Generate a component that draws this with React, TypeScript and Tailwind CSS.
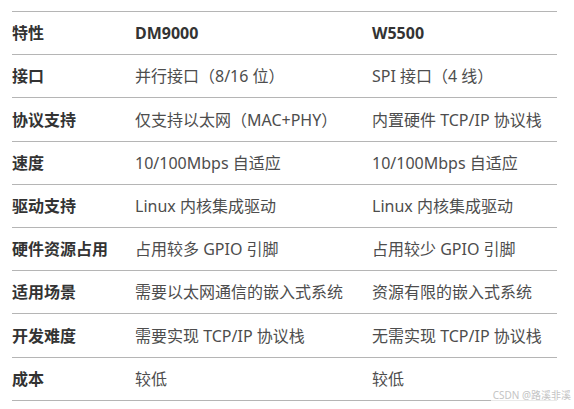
const rows = [
  { label: '接口', a: '并行接口（8/16 位）', b: 'SPI 接口（4 线）', h: 'h-[43px]' },
  { label: '协议支持', a: '仅支持以太网（MAC+PHY）', b: '内置硬件 TCP/IP 协议栈', h: 'h-[44px]' },
  { label: '速度', a: '10/100Mbps 自适应', b: '10/100Mbps 自适应', h: 'h-[43px]' },
  { label: '驱动支持', a: 'Linux 内核集成驱动', b: 'Linux 内核集成驱动', h: 'h-[43px]' },
  { label: '硬件资源占用', a: '占用较多 GPIO 引脚', b: '占用较少 GPIO 引脚', h: 'h-[43px]' },
  { label: '适用场景', a: '需要以太网通信的嵌入式系统', b: '资源有限的嵌入式系统', h: 'h-[43px]' },
  { label: '开发难度', a: '需要实现 TCP/IP 协议栈', b: '无需实现 TCP/IP 协议栈', h: 'h-[44px]' },
  { label: '成本', a: '较低', b: '较低', h: 'h-[43px]' },
]

export default function App() {
  return (
    <div
      className="relative w-[574px] h-[409px] bg-white overflow-hidden"
      style={{ fontFamily: '"Noto Sans", "Noto Sans CJK SC", sans-serif' }}
    >
      <div className="pt-[11px] pl-[12px] w-[557px]">
        <div className="border-t border-[#b5b5b5]">
          {/* Header */}
          <div className="flex items-center h-[43px] border-b border-[#b5b5b5] text-[16px] font-bold text-[#333]">
            <div className="w-[123px]">特性</div>
            <div className="w-[237px]">DM9000</div>
            <div className="flex-1">W5500</div>
          </div>
          {rows.map(r => (
            <div
              key={r.label}
              className={`flex items-center border-b border-[#b5b5b5] text-[16px] text-[#4d4d4d] ${r.h}`}
            >
              <div className="w-[123px] font-bold text-[#333]">{r.label}</div>
              <div className="w-[237px] whitespace-nowrap">{r.a}</div>
              <div className="flex-1 whitespace-nowrap">{r.b}</div>
            </div>
          ))}
        </div>
      </div>
      {/* watermark */}
      <div className="absolute right-[1px] top-[389px] bg-white/70 px-[2px] text-[10px] leading-[13px] text-[#c4c4c4]">
        CSDN @路溪非溪
      </div>
    </div>
  )
}
